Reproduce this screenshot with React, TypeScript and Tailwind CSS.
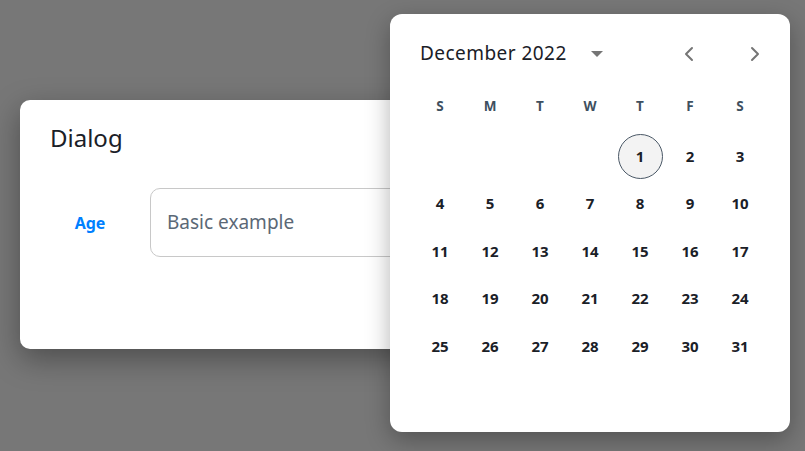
import { ChevronLeft, ChevronRight } from "lucide-react";

const WEEKDAYS = ["S", "M", "T", "W", "T", "F", "S"];

// December 2022 starts on a Thursday.
const LEAD = 4;
const DAYS = 31;
const SELECTED = 1;

const sans = { fontFamily: '"Noto Sans", "Open Sans", sans-serif' };

export default function App() {
  const cells: (number | null)[] = [
    ...Array.from({ length: LEAD }, () => null),
    ...Array.from({ length: DAYS }, (_, i) => i + 1),
  ];

  return (
    <div className="relative h-[451px] w-[805px] overflow-hidden bg-[#777777]" style={sans}>
      <DialogCard />
      <CalendarPopup cells={cells} />
    </div>
  );
}

function DialogCard() {
  return (
    <div className="absolute left-[20px] top-[100px] h-[249px] w-[440px] rounded-[10px] bg-white px-[30px] pt-[22px] shadow-[0_10px_30px_rgba(0,0,0,0.35)]">
      <div className="text-[24px] leading-[32px] text-[#1a2027]">Dialog</div>
      <div className="mt-[34px] flex items-center">
        <label className="w-[80px] text-center text-[16px] font-bold text-[#007fff]">Age</label>
        <div className="ml-[20px] flex h-[69px] flex-1 items-center rounded-[10px] border border-[#c8c8c8] px-[16px]">
          <span className="text-[19px] text-[#5b6876]">Basic example</span>
        </div>
      </div>
    </div>
  );
}

function CalendarPopup({ cells }: { cells: (number | null)[] }) {
  return (
    <div className="absolute left-[390px] top-[14px] h-[418px] w-[400px] rounded-[12px] bg-white shadow-[0_8px_24px_rgba(0,0,0,0.3)]">
      <div className="flex h-[78px] items-center pl-[30px] pr-[23px] pt-[1px]">
        <span className="text-[19px] tracking-[0.45px] text-[#1a2027]">December 2022</span>
        <svg width="12" height="6" viewBox="0 0 12 6" className="ml-[24px]">
          <path d="M0 0 L12 0 L6 6 Z" fill="#757575" />
        </svg>
        <div className="ml-auto flex items-center gap-[42px] text-[#757575]">
          <ChevronLeft size={24} strokeWidth={2} />
          <ChevronRight size={24} strokeWidth={2} />
        </div>
      </div>

      <div className="grid grid-cols-7 px-[25px]">
        {WEEKDAYS.map((d, i) => (
          <div
            key={i}
            className="flex h-[28px] items-center justify-center text-[13.5px] font-bold text-[#3e5060]"
          >
            {d}
          </div>
        ))}
      </div>

      <div className="mt-[14px] grid grid-cols-7 gap-y-[3.5px] px-[25px]">
        {cells.map((day, i) => (
          <div key={i} className="flex h-[44px] items-center justify-center">
            {day !== null && (
              <span
                className={
                  day === SELECTED
                    ? "flex size-[45px] items-center justify-center rounded-full border border-[#4a5866] bg-[#f3f3f3] text-[15px] font-bold text-[#1a2027]"
                    : "text-[15px] font-bold text-[#1a2027]"
                }
              >
                {day}
              </span>
            )}
          </div>
        ))}
      </div>
    </div>
  );
}
